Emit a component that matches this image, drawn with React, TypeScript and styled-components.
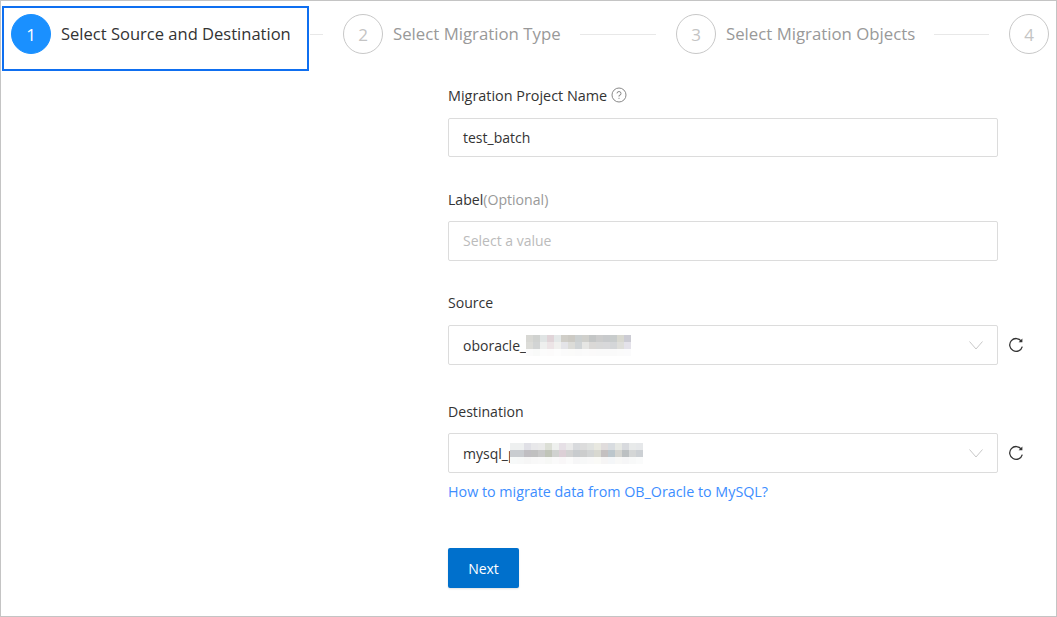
import React from "react";
import styled, { createGlobalStyle } from "styled-components";

const Global = createGlobalStyle`
  html, body { margin: 0; padding: 0; background: #fff; }
  * { box-sizing: border-box; }
`;

const Page = styled.div`
  position: relative;
  width: 1057px;
  height: 617px;
  border: 1px solid #c4c4c4;
  font-family: "Open Sans", "Noto Sans", sans-serif;
  color: #333;
  overflow: hidden;
`;

const Stepper = styled.div`
  display: flex;
  align-items: center;
  height: 40px;
  margin-top: 13px;
  padding-left: 10px;
`;

const Step = styled.div<{ $width: number }>`
  display: flex;
  align-items: center;
  flex: 0 0 ${(p) => p.$width}px;
`;

const Circle = styled.div<{ $active?: boolean }>`
  flex: 0 0 40px;
  height: 40px;
  border-radius: 50%;
  display: flex;
  align-items: center;
  justify-content: center;
  font-size: 17px;
  color: ${(p) => (p.$active ? "#fff" : "#c4c4c4")};
  background: ${(p) => (p.$active ? "#1a90ff" : "#fff")};
  border: 1px solid ${(p) => (p.$active ? "#1a90ff" : "#c8c8c8")};
`;

const StepLabel = styled.div<{ $active?: boolean }>`
  margin: 0 0 2px 10px;
  font-size: ${(p) => (p.$active ? 16.55 : 16.8)}px;
  white-space: nowrap;
  color: ${(p) => (p.$active ? "#333" : "#999")};
`;

const Line = styled.div`
  flex: 1;
  height: 1px;
  margin: 0 20px 0 19px;
  background: #e8e8e8;
`;

const Focus = styled.div`
  position: absolute;
  left: 1px;
  top: 5px;
  width: 307px;
  height: 65px;
  border: 2px solid #0f6ff0;
`;

const Form = styled.div`
  display: flex;
  flex-direction: column;
  width: 590px;
  margin-left: 447px;
  margin-top: 30px;
`;

const Field = styled.div<{ $gap: number }>`
  margin-bottom: ${(p) => p.$gap}px;
`;

const Label = styled.div<{ $gap: number; $size?: number }>`
  display: flex;
  align-items: center;
  gap: 4px;
  height: 22px;
  margin-bottom: ${(p) => p.$gap}px;
  font-size: ${(p) => p.$size ?? 14.1}px;
  color: #333;
`;

const Optional = styled.span`
  color: #999;
`;

const ControlRow = styled.div`
  display: flex;
  align-items: center;
  gap: 10px;
`;

const Control = styled.div<{ $h: number }>`
  flex: 0 0 550px;
  height: ${(p) => p.$h}px;
  border: 1px solid #dcdcdc;
  border-radius: 2px;
  display: flex;
  align-items: center;
  justify-content: space-between;
  padding: 0 14px;
  font-size: 14px;
  color: #333;
`;

const Placeholder = styled.span`
  margin-bottom: 2px;
  color: #bbb;
`;

const Value = styled.span`
  display: flex;
  align-items: center;
`;

const Mosaic = styled.span<{ $cols: number; $overlap: number }>`
  display: inline-grid;
  grid-template-columns: repeat(${(p) => p.$cols}, 7px);
  grid-auto-rows: 7px;
  margin-left: ${(p) => -p.$overlap}px;
`;

const Tile = styled.span<{ $c: string }>`
  background: ${(p) => p.$c};
`;

const Link = styled.div`
  margin-top: 9px;
  font-size: 14.3px;
  height: 20px;
  line-height: 20px;
  color: #3d8eff;
`;

const Button = styled.button`
  width: 71px;
  height: 40px;
  margin-top: 46px;
  border: none;
  border-radius: 2px;
  background: #0070cc;
  color: #fff;
  font: inherit;
  font-size: 14px;
  box-shadow: 0 1px 2px rgba(0,0,0,.12);
`;

const Chevron = () => (
  <svg width="14" height="9" viewBox="0 0 14 9" fill="none" stroke="#c8c8c8" strokeWidth="1">
    <path d="M0.5 0.5 L7 8 L13.5 0.5" />
  </svg>
);

const Refresh = () => (
  <svg width="16" height="16" viewBox="0 0 16 16" fill="none" stroke="#333" strokeWidth="1.3">
    <path d="M13.4 4.3 A6.4 6.4 0 1 0 14.3 9.6" />
    <path d="M14.4 1.4 V5.2 H10.6 Z" stroke="none" fill="#333" />
  </svg>
);

const Help = () => (
  <svg width="16" height="16" viewBox="0 0 16 16" fill="none" stroke="#888" strokeWidth="1">
    <circle cx="8" cy="8" r="7" />
    <path d="M6 6.4 A2 2 0 1 1 8 8.5 V9.6" />
    <path d="M8 10.8 V11.9" />
  </svg>
);

const sourceTiles = [
  "#d8d8d4","#d0d2d0","#e0e4e4","#e0d4d8","#e4e8e8","#d0cec8","#cccac4","#ccd0d0","#d0d0cc","#c4c6c6","#cccccc","#c8cacc","#c8cccc","#d8d8d0","#ccccd4",
  "#dcdcd8","#d2d4d4","#eeefee","#ece4e6","#f0f0ee","#e4e4e8","#dcdcd8","#d0d4d6","#e6e6e4","#dad8d6","#d8d8d8","#d8d8da","#d4d6d8","#dededa","#e4e2ea",
  "#fbfbfb","#f9faf9","#fcfcfc","#fcfbfb","#fdfdfd","#fbfbfb","#fbfbfa","#fafafa","#fbfbfb","#fbfafa","#fafafa","#fafafa","#fafafa","#fbfbfb","#fbfbfc",
];
const destTiles = [
  "#eef0f0","#eef0f0","#e0e0e6","#e8e8ea","#eaeaea","#dcdfd6","#eef0ee","#e6e0e6","#eaeaea","#d8dadd","#dcdcdc","#e0e2e0","#e8e8e0","#e0dcdc","#d8dce0","#e6e8e4","#d8dade","#e8eaea","#e6e8ea",
  "#c9ccd0","#c9ccd0","#c0bec2","#c0c0c0","#c8c8c8","#c0c4b8","#d0d2d0","#dccfd6","#d2d2d2","#c8cbce","#cccdcd","#d2d4d4","#d8d8d0","#c4c0c0","#bcc6cc","#d4d4d0","#bcc0c2","#d4d6d6","#ccd0d4",
  "#f7f9f9","#f7f8f8","#f6f6f6","#f8f8f8","#f9f9f9","#f7f8f6","#fafafa","#f9f7f8","#fbfbfb","#f6f6f7","#f7f8f8","#f9f9f9","#fafaf7","#f6f5f5","#f4f6f8","#f8f8f7","#f6f6f7","#f8f9f9","#fafbfb",
];

export default function App() {
  return (
    <Page>
      <Global />
      <Stepper>
        <Step $width={332}>
          <Circle $active>1</Circle>
          <StepLabel $active>Select Source and Destination</StepLabel>
          <Line />
        </Step>
        <Step $width={333}>
          <Circle>2</Circle>
          <StepLabel>Select Migration Type</StepLabel>
          <Line />
        </Step>
        <Step $width={333}>
          <Circle>3</Circle>
          <StepLabel>Select Migration Objects</StepLabel>
          <Line />
        </Step>
        <Circle>4</Circle>
      </Stepper>
      <Focus />
      <Form>
        <Field $gap={31}>
          <Label $gap={12} $size={14.4}>Migration Project Name <Help /></Label>
          <ControlRow><Control $h={39}>test_batch</Control></ControlRow>
        </Field>
        <Field $gap={30}>
          <Label $gap={11}><span>Label<Optional>(Optional)</Optional></span></Label>
          <ControlRow><Control $h={40}><Placeholder>Select a value</Placeholder></Control></ControlRow>
        </Field>
        <Field $gap={35}>
          <Label $gap={12}>Source</Label>
          <ControlRow>
            <Control $h={40}>
              <Value>oboracle_<Mosaic $cols={15} $overlap={0}>{sourceTiles.map((c, i) => <Tile key={i} $c={c} />)}</Mosaic></Value>
              <Chevron />
            </Control>
            <Refresh />
          </ControlRow>
        </Field>
        <Field $gap={0}>
          <Label $gap={11}>Destination</Label>
          <ControlRow>
            <Control $h={40}>
              <Value>mysql_p<Mosaic $cols={19} $overlap={6}>{destTiles.map((c, i) => <Tile key={i} $c={c} />)}</Mosaic></Value>
              <Chevron />
            </Control>
            <Refresh />
          </ControlRow>
        </Field>
        <Link>How to migrate data from OB_Oracle to MySQL?</Link>
        <Button>Next</Button>
      </Form>
    </Page>
  );
}
